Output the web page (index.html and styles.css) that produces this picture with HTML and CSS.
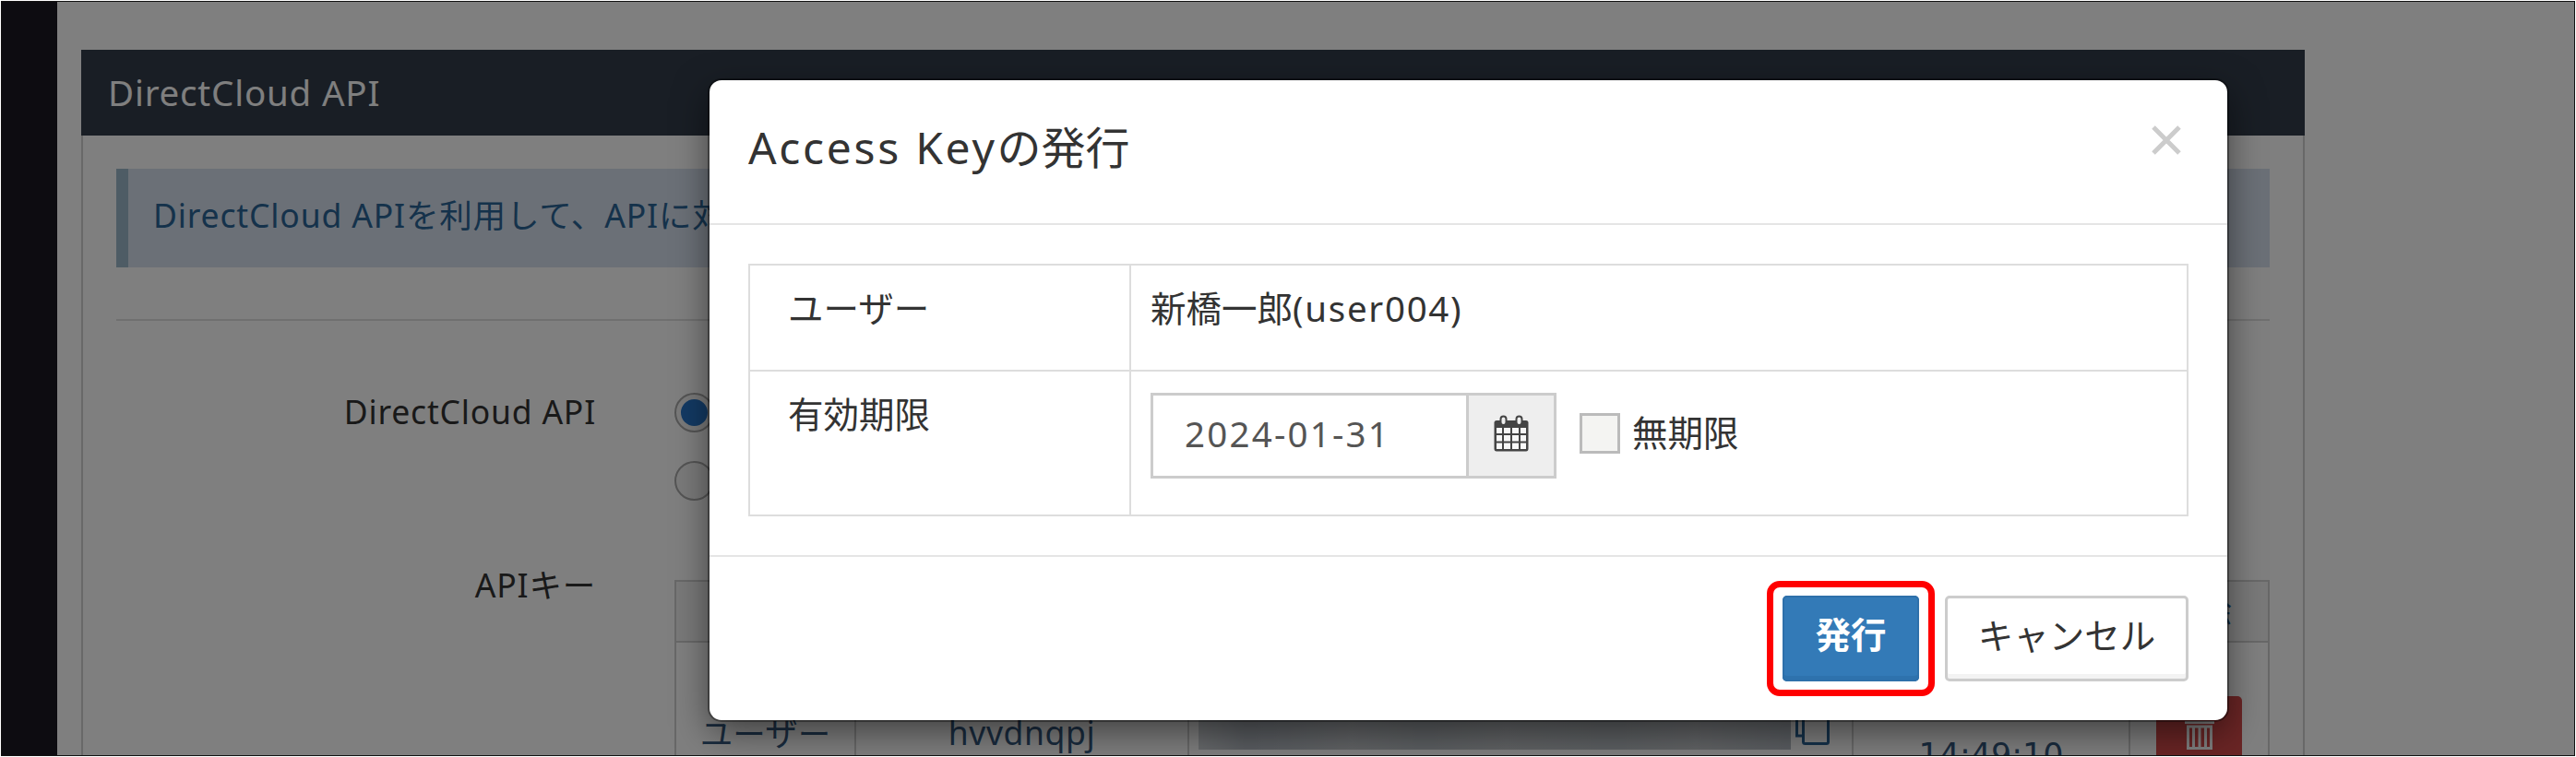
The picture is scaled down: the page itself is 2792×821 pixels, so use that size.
FILE: index.html
```html
<!DOCTYPE html>
<html lang="ja">
<head>
  <meta charset="UTF-8">
  <title>DirectCloud API</title>
  <link rel="stylesheet" href="styles.css">
</head>
<body>

  <div class="frame">
    <div class="sidebar"></div>

    <div class="main">
      <div class="panel">
        <div class="panel-heading">DirectCloud API</div>
        <div class="panel-body">
          <div class="alert">DirectCloud APIを利用して、APIに対</div>
          <div class="line"></div>

          <div class="form-row">
            <div class="label">DirectCloud API</div>
            <div class="radios">
              <span class="radio checked"></span>
              <span class="radio"></span>
            </div>
          </div>

          <div class="form-row row-keys">
            <div class="label">APIキー</div>
            <table class="keys">
              <colgroup>
                <col class="col-type"><col class="col-user"><col class="col-key"><col class="col-date"><col class="col-delete">
              </colgroup>
              <tr>
                <th></th><th></th><th></th><th></th><th>削除</th>
              </tr>
              <tr>
                <td class="user">ユーザー</td>
                <td class="user user-id">hvvdnqpj</td>
                <td>
                  <div class="key">
                    <span class="masked"></span>
                    <svg class="copy" width="40" height="46" viewBox="0 0 40 46">
                      <path d="M9 36H3.500V4H26V10" />
                      <rect x="10.500" y="10.500" width="27" height="34" rx="2" />
                    </svg>
                  </div>
                </td>
                <td class="time">14:49:10</td>
                <td>
                  <span class="btn-delete">
                    <svg width="34" height="42" viewBox="0 0 34 42">
                      <path d="M11 7V3H23V7M1 10.500H33M4.500 15V38.500H29.500V15ZM10.500 16V37M17 16V37M23.500 16V37" />
                    </svg>
                  </span>
                </td>
              </tr>
            </table>
          </div>
        </div>
      </div>
    </div>

    <div class="backdrop"></div>

    <div class="modal">
      <div class="modal-header">
        <h4 class="modal-title"><span class="title-latin">Access Key</span>の発行</h4>
        <svg class="close" width="34" height="34" viewBox="0 0 34 34">
          <path d="M3 3L31 31M31 3L3 31" />
        </svg>
      </div>
      <div class="modal-body">
        <table class="info">
          <tr class="row-user">
            <th>ユーザー</th>
            <td>新橋一郎<span class="user-code">(user004)</span></td>
          </tr>
          <tr class="row-limit">
            <th>有効期限</th>
            <td>
              <div class="limit">
                <div class="date">
                  <span class="date-value">2024-01-31</span>
                  <span class="date-addon">
                    <svg width="38" height="40" viewBox="0 0 38 40">
                      <path fill="#444" d="M3 6H35Q37.500 6 37.500 8.500V36.500Q37.500 39.500 35 39.500H3Q.5 39.500 .5 36.500V8.500Q.5 6 3 6Z" />
                      <path fill="#f8f8f8" d="M3 14H9V20H3ZM11 14H18V20H11ZM20 14H27V20H20ZM29 14H35V20H29ZM3 22H9V28.500H3ZM11 22H18V28.500H11ZM20 22H27V28.500H20ZM29 22H35V28.500H29ZM3 30.500H9V37H3ZM11 30.500H18V37H11ZM20 30.500H27V37H20ZM29 30.500H35V37H29Z" />
                      <rect x="7.500" y="1.500" width="6" height="9.500" rx="3" fill="#eee" stroke="#444" stroke-width="2" />
                      <rect x="24.500" y="1.500" width="6" height="9.500" rx="3" fill="#eee" stroke="#444" stroke-width="2" />
                    </svg>
                  </span>
                </div>
                <span class="checkbox"></span>
                <span class="no-limit">無期限</span>
              </div>
            </td>
          </tr>
        </table>
      </div>
      <div class="modal-footer">
        <div class="highlight"><div class="btn btn-primary">発行</div></div>
        <div class="btn btn-default">キャンセル</div>
      </div>
    </div>
  </div>

</body>
</html>
```

FILE: styles.css
```css
* {
  box-sizing: border-box;
}

body {
  margin: 0;
  padding: 1px;
  height: 821px;
  background: #fff;
  font-family: "Noto Sans", "Noto Sans CJK JP", sans-serif;
  font-size: 35.5px;
  color: #333;
  overflow: hidden;
}

.frame {
  position: relative;
  display: flex;
  height: 819px;
  border: 1px solid #111;
  overflow: hidden;
}

.sidebar {
  width: 60px;
  background: #1a1822;
}

.main {
  flex: 1;
  padding: 52px 0 0 26px;
}

.panel {
  width: 2410px;
}

.panel-heading {
  height: 93px;
  padding-left: 29px;
  line-height: 93px;
  font-size: 38.5px;
  letter-spacing: 0.8px;
  color: #fff;
  background: #333c4a;
}

.panel-body {
  height: 900px;
  padding: 36px 36px 0;
  border: 2px solid #d0d0d0;
  border-top: 0;
}

.alert {
  height: 107px;
  padding-left: 27px;
  border-left: 13px solid #9db8cb;
  line-height: 101px;
  letter-spacing: 0.85px;
  color: #2a6496;
  background: #d6e0ee;
  white-space: nowrap;
}

.line {
  height: 2px;
  margin-top: 56px;
  background: #e0e0e0;
}

.form-row {
  display: grid;
  grid-template-columns: 520px 1fr;
  column-gap: 85px;
  margin-top: 78px;
}

.row-keys {
  margin-top: 71px;
}

.label {
  line-height: 40px;
  letter-spacing: 0.8px;
  text-align: right;
}

.radios {
  display: flex;
  flex-direction: column;
  gap: 31px;
}

.radio {
  width: 43px;
  height: 43px;
  border: 2px solid #aaa;
  border-radius: 50%;
  background: #f4f4f4;
}

.radio.checked {
  padding: 5px;
}

.radio.checked::before {
  content: "";
  display: block;
  width: 29px;
  height: 29px;
  border-radius: 50%;
  background: #2674c8;
}

.keys {
  width: 1728px;
  margin: 15px 0 0;
  table-layout: fixed;
  border-collapse: collapse;
  text-align: center;
  color: #34587e;
}

.keys th,
.keys td {
  padding: 0;
  border: 2px solid #d0d0d0;
}

.keys th {
  height: 66px;
  line-height: 50px;
  font-weight: normal;
  color: #2a6496;
  background: #f3f3f3;
}

.keys td {
  height: 200px;
}

.col-type { width: 195px; }
.col-user { width: 361px; }
.col-key { width: 720px; }
.col-date { width: 300px; }
.col-delete { width: 151px; }

.keys .user {
  padding-bottom: 5px;
}

.user-id {
  letter-spacing: 0.6px;
}

.keys .time {
  padding-top: 46px;
  font-family: "DejaVu Sans", sans-serif;
  font-size: 35px;
}

.key {
  display: flex;
  align-items: center;
  gap: 3px;
  padding-left: 10px;
}

.masked {
  width: 642px;
  height: 34px;
  background: linear-gradient(90deg, #d0d4d8, #b4bac2 8%, #b8bec6 14%, #c4c8cc 26%, #b8bec4 38%, #c2c6ca 52%, #bac0c6 70%, #c4c8cc 84%, #b4bac2);
}

.copy {
  margin-bottom: 23px;
  fill: none;
  stroke: #2a6496;
  stroke-width: 3;
}

.btn-delete {
  display: flex;
  align-items: center;
  justify-content: center;
  width: 93px;
  height: 82px;
  margin: 0 auto;
  border-radius: 5px;
  background: #d44b4b;
}

.btn-delete svg {
  margin-bottom: 4px;
  fill: none;
  stroke: #fff;
  stroke-width: 3;
}

.backdrop {
  position: absolute;
  inset: 0;
  background: rgba(0, 0, 0, 0.5);
}

.modal {
  position: absolute;
  left: 767px;
  top: 85px;
  width: 1645px;
  height: 694px;
  border-radius: 13px;
  background: #fff;
  box-shadow: 0 0 0 2px rgba(0, 0, 0, 0.35), 0 13px 38px rgba(0, 0, 0, 0.5);
  font-size: 38.5px;
}

.modal-header {
  display: flex;
  justify-content: space-between;
  height: 157px;
  padding: 40px 49px 0 42px;
  border-bottom: 2px solid #e5e5e5;
}

.modal-title {
  margin: 0;
  font-size: 48px;
  font-weight: normal;
  line-height: 66px;
}

.title-latin {
  letter-spacing: 2.7px;
}

.close {
  margin-top: 8px;
  fill: none;
  stroke: #ccc;
  stroke-width: 5;
}

.modal-body {
  height: 358px;
  padding: 42px 42px 0 42px;
}

.info {
  width: 1561px;
  border-collapse: collapse;
  table-layout: fixed;
  line-height: 46px;
}

.info th,
.info td {
  padding: 23px 0 0 21px;
  border: 2px solid #ddd;
  vertical-align: top;
  text-align: left;
  font-weight: normal;
}

.info th {
  width: 413px;
  padding-left: 41px;
}

.user-code {
  letter-spacing: 1.7px;
}

.row-user {
  height: 115px;
}

.row-limit {
  height: 157px;
}

.limit {
  display: flex;
  align-items: center;
}

.date {
  display: flex;
  width: 440px;
  height: 93px;
  border: 3px solid #ccc;
  color: #555;
  line-height: 82px;
}

.date-value {
  flex: 1;
  padding-left: 34px;
  letter-spacing: 2.2px;
}

.date-addon {
  display: flex;
  align-items: center;
  justify-content: center;
  width: 95px;
  padding-bottom: 5px;
  border-left: 3px solid #ccc;
  background: #eee;
}

.checkbox {
  width: 44px;
  height: 44px;
  margin: 0 13px 5px 25px;
  border: 3px solid #bbb;
  background: #f4f4f2;
}

.no-limit {
  margin-bottom: 7px;
}

.modal-footer {
  display: flex;
  justify-content: flex-end;
  align-items: flex-start;
  padding: 26px 42px 0 0;
  border-top: 2px solid #e5e5e5;
}

.highlight {
  width: 182px;
  height: 125px;
  margin-right: 11px;
  padding: 9px 10px;
  border: 7px solid #f00;
  border-radius: 14px;
}

.btn {
  height: 93px;
  border-radius: 5px;
  line-height: 84px;
  text-align: center;
}

.btn-primary {
  width: 148px;
  font-weight: 600;
  color: #fff;
  background: #337ab7;
  box-shadow: inset 0 0 0 2px #2e70aa, inset 0 -6px 0 #2e72ad;
}

.btn-default {
  width: 264px;
  margin-top: 16px;
  border: 3px solid #ccc;
  line-height: 80px;
  background: #fff;
  box-shadow: inset 0 -5px 0 #f3f3f3;
}
```
